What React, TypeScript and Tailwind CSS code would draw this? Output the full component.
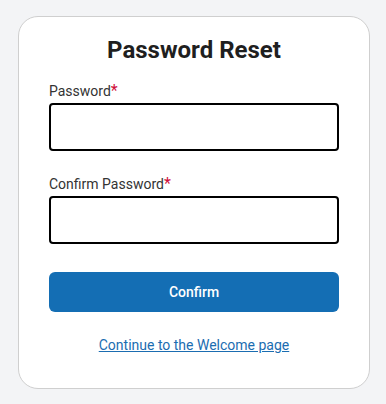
export default function App() {
  return (
    <div className="min-h-[404px] bg-[#f3f4f6] pt-[16px] pl-[18px]" style={{ fontFamily: 'Roboto, "Noto Sans", sans-serif' }}>
      <div className="w-[352px] bg-white border border-[#cfcfcf] rounded-[20px] px-[30px] pt-[17px] pb-[33px]">
        <h1 className="text-center text-[24px] leading-[32px] font-bold text-[#1f1f1f]">Password Reset</h1>
        <form className="mt-[15px]" onSubmit={e => e.preventDefault()}>
          <label className="block text-[14px] leading-[20px] text-[#333]">
            Password<span className="text-[16px] leading-none text-[#d0103a]">*</span>
          </label>
          <input type="password" className="mt-[2px] block w-full h-[48px] border-2 border-black rounded-[4px] px-3 outline-none" />
          <label className="block mt-[23px] text-[14px] leading-[20px] text-[#333]">
            Confirm Password<span className="text-[16px] leading-none text-[#d0103a]">*</span>
          </label>
          <input type="password" className="mt-[2px] block w-full h-[48px] border-2 border-black rounded-[4px] px-3 outline-none" />
          <button type="submit" className="mt-[28px] w-full h-[40px] rounded-[6px] bg-[#146eb4] text-white text-[14px] font-medium">
            Confirm
          </button>
        </form>
        <div className="mt-[23px] text-center text-[14px] leading-[20px]">
          <a href="#" className="text-[#1b6db1] underline">Continue to the Welcome page</a>
        </div>
      </div>
    </div>
  );
}
